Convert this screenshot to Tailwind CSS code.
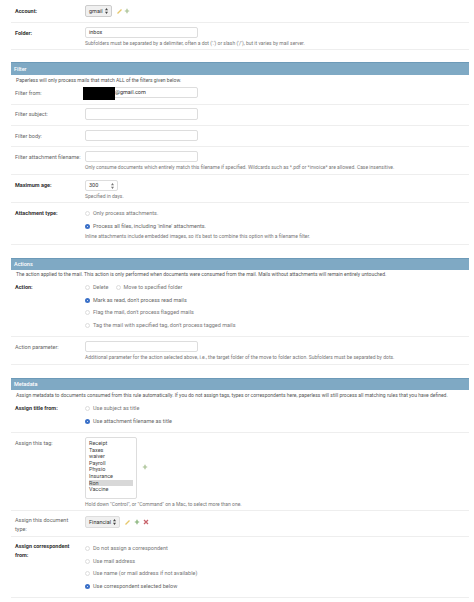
<!DOCTYPE html>
<html lang="en">
<head>
<meta charset="UTF-8" />
<title>Mail rule</title>
<script src="https://cdn.jsdelivr.net/npm/@tailwindcss/browser@4"></script>
</head>
<body class="bg-white font-['Roboto',sans-serif] text-[5.5px] leading-[7px] text-[#444] overflow-hidden">
<div class="relative w-[474px] h-[602px] pl-[11px] pr-[5px]">

  <!-- General -->
  <div class="h-[23px] border-b border-[#eee] flex pl-[4px] pt-[5px]">
    <label class="w-[70px] font-bold text-[#333] pt-[3px]">Account:</label>
    <div class="w-[27px] h-[12px] bg-[#f0f0f0] border border-[#ccc] rounded-[2px] flex items-center justify-between px-[3px] text-[#333]">
      <span>gmail</span>
      <svg width="3" height="6" viewBox="0 0 3 6"><path d="M1.5 0L3 2.3H0ZM1.5 6L3 3.7H0Z" fill="#444"/></svg>
    </div>
    <svg class="ml-[5px] mt-[3px]" width="6" height="6" viewBox="0 0 6 6"><path d="M0.5 5.5L4.5 1.5" stroke="#e6c76a" stroke-width="1.3"/></svg>
    <svg class="ml-[1px] mt-[3px]" width="6" height="6" viewBox="0 0 6 6"><path d="M3 .8V5.2M.8 3H5.2" stroke="#a5bf8f" stroke-width="1.2"/></svg>
  </div>
  <div class="h-[27px] border-b border-[#eee] flex pl-[4px] pt-[4px]">
    <label class="w-[70px] font-bold text-[#333] pt-[3px]">Folder:</label>
    <div>
      <div class="w-[113px] h-[11px] border border-[#ddd] rounded-[2px] px-[3px] text-[#333] flex items-center">inbox</div>
      <p class="mt-[2px] text-[5px] text-[#777] whitespace-nowrap">Subfolders must be separated by a delimiter, often a dot ('.') or slash ('/'), but it varies by mail server.</p>
    </div>
  </div>

  <!-- Filter -->
  <h2 class="mt-[12px] h-[13px] bg-[#7fa9c4] border-t border-[#6d9ab8] text-white font-medium pl-[3px] flex items-center">Filter</h2>
  <p class="h-[11px] pl-[5px] pt-[2px] text-[5px] text-[#555]">Paperless will only process mails that match ALL of the filters given below.</p>
  <div class="h-[19px] border-b border-[#eee] flex pl-[4px] pt-[1px]">
    <label class="w-[70px] text-[#666] pt-[3px]">Filter from:</label>
    <div class="w-[113px] h-[11px] border border-[#ddd] rounded-[2px] pl-[29px] text-[#333] flex items-center">@gmail.com</div>
  </div>
  <div class="h-[21px] border-b border-[#eee] flex pl-[4px] pt-[3px]">
    <label class="w-[70px] text-[#666] pt-[3px]">Filter subject:</label>
    <div class="w-[113px] h-[12px] border border-[#ddd] rounded-[2px]"></div>
  </div>
  <div class="h-[21px] border-b border-[#eee] flex pl-[4px] pt-[4px]">
    <label class="w-[70px] text-[#666] pt-[3px]">Filter body:</label>
    <div class="w-[113px] h-[11px] border border-[#ddd] rounded-[2px]"></div>
  </div>
  <div class="h-[28px] border-b border-[#eee] flex pl-[4px] pt-[4px]">
    <label class="w-[70px] text-[#666] pt-[3px] whitespace-nowrap">Filter attachment filename:</label>
    <div>
      <div class="w-[113px] h-[11px] border border-[#ddd] rounded-[2px]"></div>
      <p class="mt-[2px] text-[5px] text-[#777] whitespace-nowrap">Only consume documents which entirely match this filename if specified. Wildcards such as *.pdf or *invoice* are allowed. Case insensitive.</p>
    </div>
  </div>
  <div class="h-[28px] border-b border-[#eee] flex pl-[4px] pt-[5px]">
    <label class="w-[70px] font-bold text-[#333] pt-[2px]">Maximum age:</label>
    <div>
      <div class="w-[33px] h-[11px] border border-[#ddd] rounded-[2px] px-[3px] text-[#333] flex items-center justify-between">
        <span>300</span>
        <svg width="3" height="6" viewBox="0 0 3 6"><path d="M1.5 0L3 2.3H0ZM1.5 6L3 3.7H0Z" fill="#777"/></svg>
      </div>
      <p class="mt-[2px] text-[5px] text-[#777]">Specified in days.</p>
    </div>
  </div>
  <div class="h-[42px] border-b border-[#eee] flex pl-[4px] pt-[7px]">
    <label class="w-[70px] font-bold text-[#333]">Attachment type:</label>
    <div>
      <div class="flex items-center h-[7px] gap-[3px] text-[#777]"><span class="w-[5px] h-[5px] rounded-full border border-[#ddd]"></span><span>Only process attachments.</span></div>
      <div class="flex items-center h-[7px] mt-[6px] gap-[3px] text-[#666]"><span class="w-[5px] h-[5px] rounded-full bg-white border-[2px] border-[#3a70c8]"></span><span>Process all files, including 'inline' attachments.</span></div>
      <p class="mt-[3px] text-[5px] text-[#777] whitespace-nowrap">Inline attachments include embedded images, so it's best to combine this option with a filename filter.</p>
    </div>
  </div>

  <!-- Actions -->
  <h2 class="mt-[13px] h-[12px] bg-[#7fa9c4] border-t border-[#6d9ab8] text-white font-medium pl-[3px] flex items-center">Actions</h2>
  <p class="h-[11px] pl-[5px] pt-[1px] text-[5px] text-[#555] whitespace-nowrap">The action applied to the mail. This action is only performed when documents were consumed from the mail. Mails without attachments will remain entirely untouched.</p>
  <div class="h-[56px] border-b border-[#eee] flex pl-[4px] pt-[3px]">
    <label class="w-[70px] font-bold text-[#333]">Action:</label>
    <div>
      <div class="flex items-center h-[7px] text-[#777]"><span class="w-[5px] h-[5px] rounded-full border border-[#ddd]"></span><span class="ml-[3px]">Delete</span><span class="ml-[7px] w-[5px] h-[5px] rounded-full border border-[#ddd]"></span><span class="ml-[3px]">Move to specified folder</span></div>
      <div class="flex items-center h-[7px] mt-[5.7px] gap-[3px] text-[#666]"><span class="w-[5px] h-[5px] rounded-full bg-white border-[2px] border-[#3a70c8]"></span><span>Mark as read, don't process read mails</span></div>
      <div class="flex items-center h-[7px] mt-[5.7px] gap-[3px] text-[#777]"><span class="w-[5px] h-[5px] rounded-full border border-[#ddd]"></span><span>Flag the mail, don't process flagged mails</span></div>
      <div class="flex items-center h-[7px] mt-[5.7px] gap-[3px] text-[#777]"><span class="w-[5px] h-[5px] rounded-full border border-[#ddd]"></span><span>Tag the mail with specified tag, don't process tagged mails</span></div>
    </div>
  </div>
  <div class="h-[28px] border-b border-[#eee] flex pl-[4px] pt-[4px]">
    <label class="w-[70px] text-[#666] pt-[3px]">Action parameter:</label>
    <div>
      <div class="w-[113px] h-[11px] border border-[#ddd] rounded-[2px]"></div>
      <p class="mt-[2px] text-[5px] text-[#777] whitespace-nowrap">Additional parameter for the action selected above, i.e., the target folder of the move to folder action. Subfolders must be separated by dots.</p>
    </div>
  </div>

  <!-- Metadata -->
  <h2 class="mt-[13px] h-[12px] bg-[#7fa9c4] border-t border-[#6d9ab8] text-white font-medium pl-[3px] flex items-center">Metadata</h2>
  <p class="h-[11px] pl-[5px] pt-[2px] text-[5px] text-[#555] whitespace-nowrap">Assign metadata to documents consumed from this rule automatically. If you do not assign tags, types or correspondents here, paperless will still process all matching rules that you have defined.</p>
  <div class="h-[32px] border-b border-[#eee] flex pl-[4px] pt-[4px]">
    <label class="w-[70px] font-bold text-[#333]">Assign title from:</label>
    <div>
      <div class="flex items-center h-[7px] gap-[3px] text-[#777]"><span class="w-[5px] h-[5px] rounded-full border border-[#ddd]"></span><span>Use subject as title</span></div>
      <div class="flex items-center h-[7px] mt-[6px] gap-[3px] text-[#666]"><span class="w-[5px] h-[5px] rounded-full bg-white border-[2px] border-[#3a70c8]"></span><span>Use attachment filename as title</span></div>
    </div>
  </div>
  <div class="h-[78px] border-b border-[#eee] flex pl-[4px] pt-[4px]">
    <label class="w-[70px] text-[#666] pt-[3px]">Assign this tag:</label>
    <div>
      <div class="flex">
        <ul class="w-[52px] h-[62px] border border-[#ddd] rounded-[2px] pt-[2px] px-[3px] text-[#444] leading-[6.6px]">
          <li>Receipt</li>
          <li>Taxes</li>
          <li>waiver</li>
          <li>Payroll</li>
          <li>Physio</li>
          <li>Insurance</li>
          <li class="bg-[#d8d8d8]">Ron</li>
          <li>Vaccine</li>
        </ul>
        <svg class="ml-[5px] mt-[27px]" width="6" height="6" viewBox="0 0 6 6"><path d="M3 .8V5.2M.8 3H5.2" stroke="#a5bf8f" stroke-width="1.2"/></svg>
      </div>
      <p class="mt-[2px] text-[5px] text-[#777] whitespace-nowrap">Hold down "Control", or "Command" on a Mac, to select more than one.</p>
    </div>
  </div>
  <div class="h-[26px] border-b border-[#eee] flex pl-[4px] pt-[5px]">
    <label class="w-[70px] text-[#666] pr-[8px] leading-[8.5px]">Assign this document type:</label>
    <div class="w-[35px] h-[12px] bg-[#f0f0f0] border border-[#ddd] rounded-[2px] flex items-center justify-between px-[3px] text-[#333]">
      <span>Financial</span>
      <svg width="3" height="6" viewBox="0 0 3 6"><path d="M1.5 0L3 2.3H0ZM1.5 6L3 3.7H0Z" fill="#444"/></svg>
    </div>
    <svg class="ml-[5px] mt-[3px]" width="6" height="6" viewBox="0 0 6 6"><path d="M0.5 5.5L4.5 1.5" stroke="#e6c76a" stroke-width="1.3"/></svg>
    <svg class="ml-[3px] mt-[3px]" width="6" height="6" viewBox="0 0 6 6"><path d="M3 .8V5.2M.8 3H5.2" stroke="#7fae70" stroke-width="1.2"/></svg>
    <svg class="ml-[3px] mt-[3px]" width="6" height="6" viewBox="0 0 6 6"><path d="M1 1L5 5M5 1L1 5" stroke="#c8636b" stroke-width="1.3"/></svg>
  </div>
  <div class="h-[61px] border-b border-[#eee] flex pl-[4px] pt-[5px]">
    <label class="w-[70px] font-bold text-[#333] pr-[8px] leading-[8.5px]">Assign correspondent from:</label>
    <div class="pt-[3px]">
      <div class="flex items-center h-[7px] gap-[3px] text-[#777]"><span class="w-[5px] h-[5px] rounded-full border border-[#ddd]"></span><span>Do not assign a correspondent</span></div>
      <div class="flex items-center h-[7px] mt-[5.7px] gap-[3px] text-[#777]"><span class="w-[5px] h-[5px] rounded-full border border-[#ddd]"></span><span>Use mail address</span></div>
      <div class="flex items-center h-[7px] mt-[5.7px] gap-[3px] text-[#777]"><span class="w-[5px] h-[5px] rounded-full border border-[#ddd]"></span><span>Use name (or mail address if not available)</span></div>
      <div class="flex items-center h-[7px] mt-[5.7px] gap-[3px] text-[#666]"><span class="w-[5px] h-[5px] rounded-full bg-white border-[2px] border-[#3a70c8]"></span><span>Use correspondent selected below</span></div>
    </div>
  </div>

  <!-- redaction over the email address -->
  <div class="absolute left-[83px] top-[87px] w-[32px] h-[13px] bg-black"></div>
</div>
</body>
</html>
